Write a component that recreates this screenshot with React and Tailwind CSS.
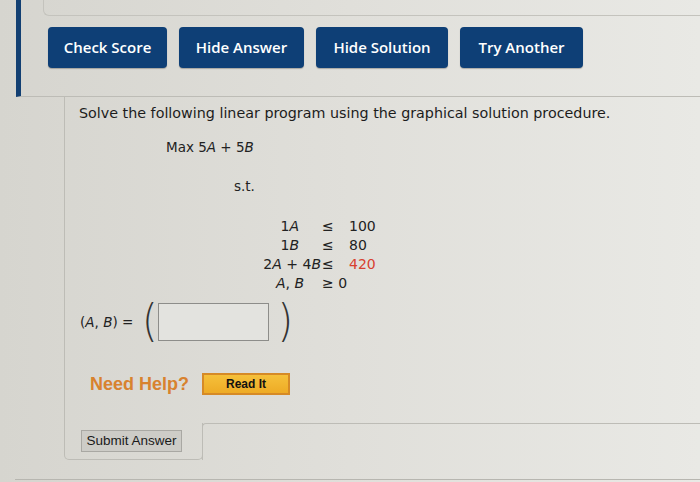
export default function App() {
  const btn =
    "h-[41px] rounded-[4px] bg-[#0e3f76] text-white text-[15px] font-semibold flex items-center justify-center shadow-[0_1px_1px_rgba(0,0,0,0.25)]";
  const dv = { fontFamily: '"DejaVu Sans", Verdana, sans-serif' };
  return (
    <div
      className="w-[700px] h-[482px] overflow-hidden bg-linear-to-r from-[#d6d5cf] via-[#e0dfda] to-[#e9e9e5] text-[#222]"
      style={dv}
    >
      {/* top section with blue bar */}
      <div className="ml-[16px] h-[97px] border-l-[5px] border-l-[#123f72] border-b border-b-[#bdbcb6]">
        <div className="ml-[22px] h-[16px] border-l border-b border-[#c4c3bd] rounded-bl-[6px]" />
        <div
          className="mt-[11px] ml-[27px] flex gap-[12px]"
          style={{ fontFamily: '"Open Sans", sans-serif' }}
        >
          <div className={btn + " w-[119px]"}>Check Score</div>
          <div className={btn + " w-[125px]"}>Hide Answer</div>
          <div className={btn + " w-[132px]"}>Hide Solution</div>
          <div className={btn + " w-[123px]"}>Try Another</div>
        </div>
      </div>

      {/* main question panel */}
      <div className="ml-[64px] flex flex-col">
        <div className="h-[326px] border-l border-[#bdbcb6] flex flex-col">
          <p className="mt-[6px] ml-[14px] text-[14.3px] leading-[20px] text-[#1c1c1c] whitespace-nowrap">
            Solve the following linear program using the graphical solution procedure.
          </p>
          <p className="mt-[14px] ml-[101px] text-[13.5px] leading-[20px]">
            Max 5<i>A</i> + 5<i>B</i>
          </p>
          <p className="mt-[19px] ml-[169px] text-[13.5px] leading-[20px]">s.t.</p>

          <div className="mt-[21px] ml-[190px] grid grid-cols-[66px_28px_auto] text-[14px] leading-[19px]">
            <span className="text-right pr-[22px]">
              1<i>A</i>
            </span>
            <span className="pl-[1px]">≤</span>
            <span>100</span>
            <span className="text-right pr-[22px]">
              1<i>B</i>
            </span>
            <span className="pl-[1px]">≤</span>
            <span>80</span>
            <span className="text-right whitespace-nowrap">
              2<i>A</i> + 4<i>B</i>
            </span>
            <span className="pl-[1px]">≤</span>
            <span className="text-[#d8402f]">420</span>
            <span className="text-right pr-[17px] whitespace-nowrap">
              <i>A</i>, <i>B</i>
            </span>
            <span className="col-span-2 pl-[1px] whitespace-nowrap">≥ 0</span>
          </div>

          <div className="mt-[10px] ml-[15px] flex items-center h-[38px]">
            <span className="text-[13.5px] w-[62px] whitespace-nowrap">
              (<i>A</i>, <i>B</i>) =
            </span>
            <span className="text-[40px] leading-none font-extralight text-[#333] -mt-[4px] scale-y-[1.12]">
              (
            </span>
            <div className="ml-[0px] w-[111px] h-[38px] border border-[#8d8d8a] bg-[#e3e3df]" />
            <span className="ml-[9px] text-[40px] leading-none font-extralight text-[#333] -mt-[4px] scale-y-[1.12]">
              )
            </span>
          </div>

          <div
            className="mt-[32px] ml-[26px] flex items-center h-[22px]"
            style={{ fontFamily: '"Liberation Sans", Arial, sans-serif' }}
          >
            <span className="text-[18px] font-bold text-[#d8822e] w-[112px] -ml-[1px]">Need Help?</span>
            <div className="w-[88px] h-[22px] border-2 border-[#d68a26] bg-linear-to-b from-[#f5c03a] to-[#eeab25] flex items-center justify-center text-[12px] font-bold text-[#111]">
              Read It
            </div>
          </div>
        </div>

        <div className="flex h-[37px]">
          <div className="w-[139px] border-l border-r border-b border-[#bdbcb6] rounded-b-[5px] pt-[7px] pl-[16px]">
            <div
              className="w-[101px] h-[22px] bg-[#cdccc7] border border-[#a9a8a3] flex items-center justify-center text-[13.5px] text-[#1a1a1a]"
              style={{ fontFamily: '"Liberation Sans", Arial, sans-serif' }}
            >
              Submit Answer
            </div>
          </div>
          <div className="flex-1 -ml-px border-t border-l border-[#bdbcb6] rounded-tl-[4px]" />
        </div>
      </div>

      <div className="mt-[19px] ml-[15px] border-t border-[#b7b6b0]" />
    </div>
  );
}
